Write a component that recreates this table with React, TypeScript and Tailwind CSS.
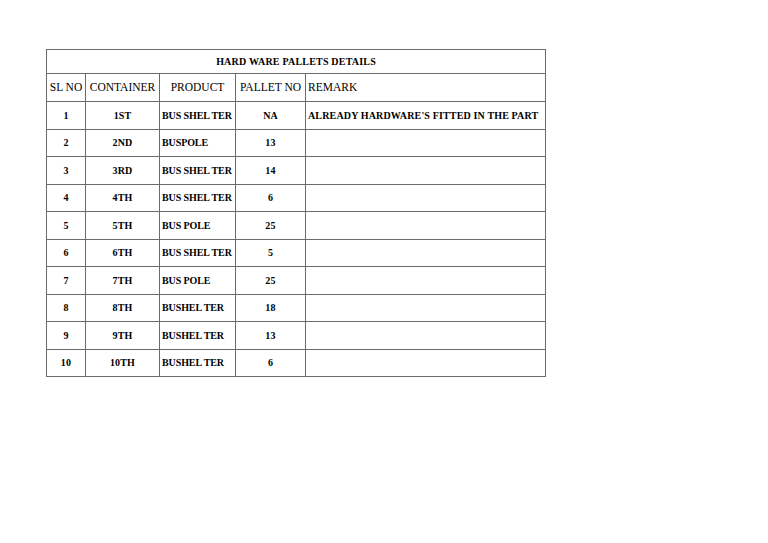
const rows = [
  ["1", "1ST", "BUS SHEL TER", "NA", "ALREADY HARDWARE'S FITTED IN THE PART"],
  ["2", "2ND", "BUSPOLE", "13", ""],
  ["3", "3RD", "BUS SHEL TER", "14", ""],
  ["4", "4TH", "BUS SHEL TER", "6", ""],
  ["5", "5TH", "BUS POLE", "25", ""],
  ["6", "6TH", "BUS SHEL TER", "5", ""],
  ["7", "7TH", "BUS POLE", "25", ""],
  ["8", "8TH", "BUSHEL TER", "18", ""],
  ["9", "9TH", "BUSHEL TER", "13", ""],
  ["10", "10TH", "BUSHEL TER", "6", ""],
]

const cell = "border border-[#6b6b6b] p-0 font-['Liberation_Serif',serif]"

export default function App() {
  return (
    <div className="w-[768px] h-[543px] bg-white pl-[46px] pt-[49px] font-['Liberation_Serif',serif] text-black">
      <table className="border-collapse table-fixed w-[499px] font-['Liberation_Serif',serif]">
        <colgroup>
          <col className="w-[39px]" />
          <col className="w-[74px]" />
          <col className="w-[76px]" />
          <col className="w-[70px]" />
          <col className="w-[240px]" />
        </colgroup>
        <tbody>
          <tr className="h-[24px]">
            <td colSpan={5} className={`${cell} text-center text-[10px] font-bold tracking-[0.2px]`}>
              HARD WARE PALLETS DETAILS
            </td>
          </tr>
          <tr className="h-[28px] text-[11.5px]">
            <td className={`${cell} text-center whitespace-nowrap`}>SL NO</td>
            <td className={`${cell} text-center whitespace-nowrap`}>CONTAINER</td>
            <td className={`${cell} text-center whitespace-nowrap`}>PRODUCT</td>
            <td className={`${cell} text-center whitespace-nowrap`}>PALLET NO</td>
            <td className={`${cell} pl-[2px] whitespace-nowrap`}>REMARK</td>
          </tr>
          {rows.map((r) => (
            <tr key={r[0]} className="h-[27.5px] text-[10px] font-bold tracking-[0.15px]">
              <td className={`${cell} text-center`}>{r[0]}</td>
              <td className={`${cell} text-center`}>{r[1]}</td>
              <td className={`${cell} pl-[2px] whitespace-nowrap tracking-[-0.1px]`}>{r[2]}</td>
              <td className={`${cell} text-center`}>{r[3]}</td>
              <td className={`${cell} pl-[2px] whitespace-nowrap`}>{r[4]}</td>
            </tr>
          ))}
        </tbody>
      </table>
    </div>
  )
}
